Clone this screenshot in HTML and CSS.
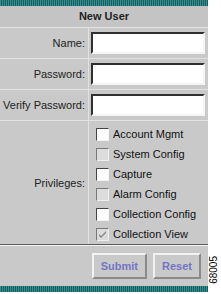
FILE: index.html
```html
<!DOCTYPE html>
<html lang="en">
<head>
    <meta charset="UTF-8">
    <title>New User</title>
    <link rel="stylesheet" href="styles.css">
</head>
<body>
    <div class="panel">
        <div class="bar"></div>
        <div class="title">New User</div>
        <div class="row">
            <label class="label" for="name">Name:</label>
            <div class="field"><input type="text" id="name"></div>
        </div>
        <div class="row">
            <label class="label" for="pass">Password:</label>
            <div class="field"><input type="password" id="pass"></div>
        </div>
        <div class="row">
            <label class="label" for="verify">Verify Password:</label>
            <div class="field"><input type="password" id="verify"></div>
        </div>
        <div class="row privs">
            <div class="label">Privileges:</div>
            <div class="field checks">
                <div class="check"><span class="box"></span>Account Mgmt</div>
                <div class="check"><span class="box off"></span>System Config</div>
                <div class="check"><span class="box"></span>Capture</div>
                <div class="check"><span class="box off"></span>Alarm Config</div>
                <div class="check"><span class="box"></span>Collection Config</div>
                <div class="check"><span class="box off"><svg width="9" height="9" viewBox="0 0 9 9"><path d="M1 4 L3 6 L8 1 L8 3 L3 8 L1 6 Z" fill="#8a8a8a"/></svg></span>Collection View</div>
            </div>
        </div>
        <div class="buttons">
            <button type="button" class="btn">Submit</button>
            <button type="button" class="btn">Reset</button>
        </div>
        <div class="bar"></div>
    </div>
    <div class="fig">68005</div>
</body>
</html>
```

FILE: styles.css
```css
body {
    margin: 0;
    background: #fff;
    font-family: 'Liberation Sans', Arial, sans-serif;
    font-size: 11px;
    color: #000;
    position: relative;
    width: 221px;
    height: 294px;
    overflow: hidden;
}
.panel {
    width: 208px;
    background: #c9c9c9;
}
.bar {
    height: 6px;
    background: repeating-linear-gradient(90deg, #3b8c8c 0 1px, #145f5f 1px 2px);
}
.title {
    height: 21px;
    line-height: 21px;
    text-align: center;
    font-weight: bold;
    color: #222;
    background: #c4c4c4;
}
.row {
    display: grid;
    grid-template-columns: 89px 1fr;
    border-top: 1px solid #e2e2e2;
}
.label {
    display: flex;
    align-items: center;
    justify-content: flex-end;
    padding-right: 3px;
    border-right: 1px solid #e2e2e2;
    color: #222;
}
.field {
    padding: 4px 0 4px 2px;
}
.field input {
    display: block;
    box-sizing: border-box;
    width: 114px;
    height: 22px;
    margin: 0;
    background: #fff;
    border: 2px solid;
    border-color: #303030 #f4f4f4 #f4f4f4 #303030;
}
.checks {
    padding: 3px 0 0 7px;
}
.check {
    display: flex;
    align-items: center;
    height: 20px;
    color: #111;
}
.box {
    box-sizing: border-box;
    width: 13px;
    height: 13px;
    margin-right: 4px;
    background: #fff;
    border: 1px solid;
    border-color: #444 #f2f2f2 #f2f2f2 #444;
    display: flex;
    align-items: center;
    justify-content: center;
}
.box.off {
    background: #dcdcdc;
    border-color: #777 #eee #eee #777;
}
.buttons {
    display: flex;
    justify-content: flex-end;
    gap: 6px;
    height: 41px;
    padding: 8px 7px 0 0;
    box-sizing: border-box;
    border-top: 1px solid #5a5a5a;
    box-shadow: inset 0 1px 0 #f4f4f4;
    margin-bottom: 1px;
}
.btn {
    height: 26px;
    padding: 0 7px;
    font-family: 'Liberation Sans', Arial, sans-serif;
    font-size: 11px;
    font-weight: bold;
    color: #7474c4;
    background: #c9c9c9;
    border: 2px solid;
    border-color: #f2f2f2 #8a8a8a #8a8a8a #f2f2f2;
}
.fig {
    position: absolute;
    left: 209px;
    top: 256px;
    writing-mode: vertical-rl;
    transform: rotate(180deg);
    font-family: 'Liberation Sans', Arial, sans-serif;
    font-size: 10px;
    line-height: 10px;
}
```
